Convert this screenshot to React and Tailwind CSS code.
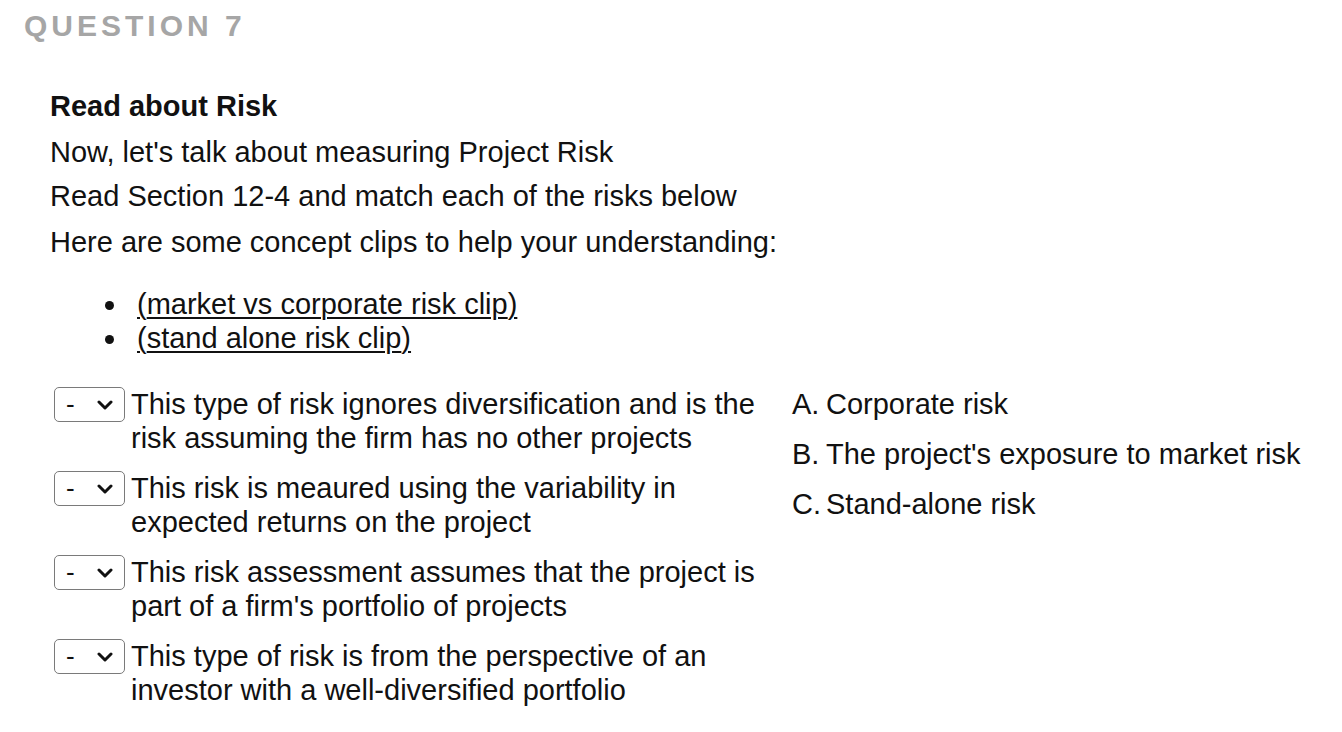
const prompts = [
    ['This type of risk ignores diversification and is the', 'risk assuming the firm has no other projects'],
    ['This risk is meaured using the variability in', 'expected returns on the project'],
    ['This risk assessment assumes that the project is', "part of a firm's portfolio of projects"],
    ['This type of risk is from the perspective of an', 'investor with a well-diversified portfolio'],
];

const answers = [
    { letter: 'A.', text: 'Corporate risk' },
    { letter: 'B.', text: "The project's exposure to market risk" },
    { letter: 'C.', text: 'Stand-alone risk' },
];

const clips = ['market vs corporate risk clip', 'stand alone risk clip'];

// dropdown drawn by hand so the chevron matches the native mac control
const FakeSelect = () => (
    <div className="w-[71px] h-[35px] shrink-0 border border-[#7a7a7a] rounded-[5px] flex items-center justify-between pl-[11px] pr-[11px] bg-white">
        <span className="text-[26px] leading-none -mt-[2px]">-</span>
        <svg width="16" height="10" viewBox="0 0 16 10" className="text-[#111]">
            <polyline points="2,2 8,8 14,2" fill="none" stroke="currentColor" strokeWidth="3" strokeLinecap="round" strokeLinejoin="round" />
        </svg>
    </div>
);

export default function App() {
    return (
        <div className="min-h-screen bg-white text-[#111] font-['Liberation_Sans',Arial,sans-serif] antialiased">
            {/* Header */}
            <h2 className="pl-[24px] pt-[8px] text-[30px] leading-[36px] font-bold tracking-[4px] text-[#a6a6a6]">
                QUESTION 7
            </h2>

            <div className="pl-[50px] pt-[45px] text-[29px]">
                <p className="font-bold leading-[34px]">Read about Risk</p>
                <p className="leading-[34px] mt-[12px]">Now, let's talk about measuring Project Risk</p>
                <p className="leading-[34px] mt-[10px]">Read Section 12-4 and match each of the risks below</p>
                <p className="leading-[34px] mt-[12px]">Here are some concept clips to help your understanding:</p>

                {/* Clip links */}
                <ul className="mt-[28px] pl-[79px] list-disc">
                    {clips.map((c) => (
                        <li key={c} className="leading-[34px] pl-[8px]">
                            <a className="underline decoration-[1.5px] underline-offset-[3px] text-[#111]">({c})</a>
                        </li>
                    ))}
                </ul>

                {/* Matching */}
                <div className="flex mt-[32px] pl-[4px]">
                    <div className="w-[738px] flex flex-col gap-[16px]">
                        {prompts.map((p, i) => (
                            <div key={i} className="flex gap-[6px]">
                                <FakeSelect />
                                <p className="leading-[34px] whitespace-nowrap">
                                    {p[0]}
                                    <br />
                                    {p[1]}
                                </p>
                            </div>
                        ))}
                    </div>
                    <ol className="flex flex-col gap-[16px]">
                        {answers.map((a) => (
                            <li key={a.letter} className="flex leading-[34px]">
                                <span className="w-[34px]">{a.letter}</span>
                                <span>{a.text}</span>
                            </li>
                        ))}
                    </ol>
                </div>
            </div>
        </div>
    );
}
